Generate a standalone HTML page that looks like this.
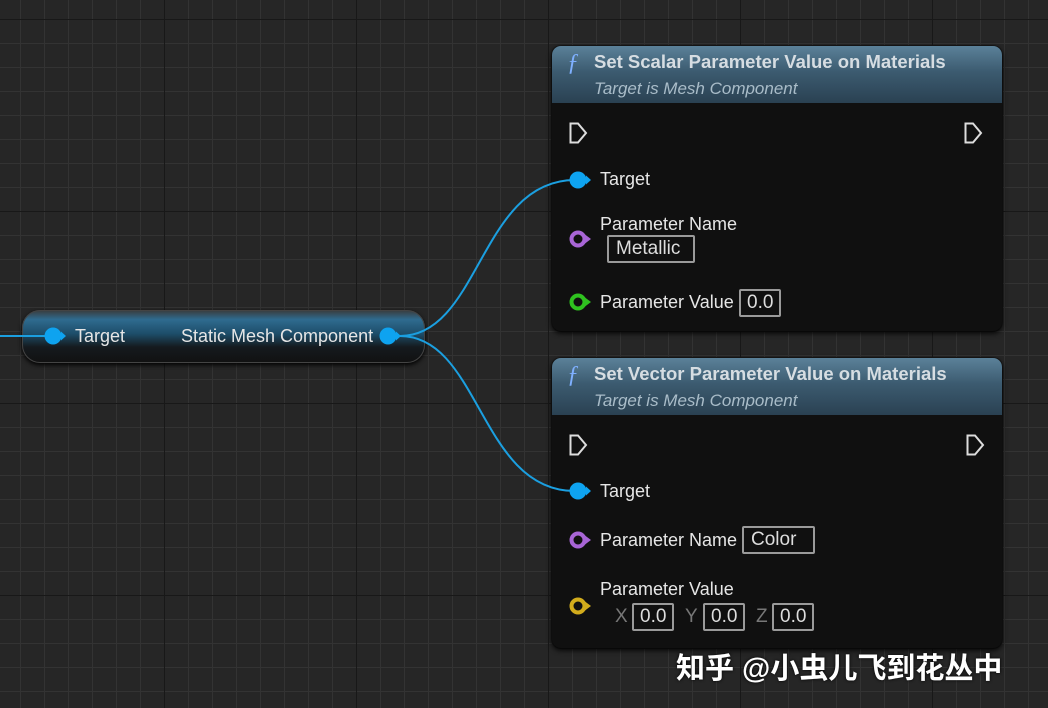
<!DOCTYPE html>
<html><head><meta charset="utf-8"><style>
body{margin:0;width:1048px;height:708px;overflow:hidden;background:#262626;font-family:"Liberation Sans","Noto Sans CJK SC",sans-serif;color:#e6e6e6;position:relative}
.grid{position:absolute;inset:0;
background-image:
linear-gradient(to right,#181818 1px,transparent 1px),
linear-gradient(to bottom,#181818 1px,transparent 1px),
linear-gradient(to right,#333 1px,transparent 1px),
linear-gradient(to bottom,#333 1px,transparent 1px);
background-size:192px 192px,192px 192px,24px 24px,24px 24px;
background-position:164px 19px,164px 19px,20px 19px,20px 19px}
.node{position:absolute;background:#101010;border-radius:9px;box-shadow:0 2px 6px #000,0 0 0 1px #1a1a1a;overflow:hidden}
.hdr{position:absolute;left:0;right:0;top:0;height:57px;background:linear-gradient(180deg,#5b8199 0%,#3c5b70 45%,#2a4152 100%)}
.t{position:absolute;white-space:nowrap;font-size:18px}
.title{font-weight:bold;font-size:18.5px;color:#d6dde2}
.sub{font-style:italic;font-size:17px;color:#a9bcc8}
.box{position:absolute;border:2px solid #9a9a9a;border-radius:2px;font-size:19px;color:#ddd;padding:0 7px;line-height:24px;white-space:nowrap}
.f{position:absolute;font-family:"Liberation Serif",serif;font-style:italic;font-size:24px;color:#7fb0ff}
svg{position:absolute;overflow:visible}
</style></head><body>
<div class="grid"></div>

<!-- compact node -->
<div style="position:absolute;left:22px;top:310px;width:403px;height:53px;border-radius:18px;background:linear-gradient(180deg,#3a3a3a 0%,#2f6b8f 18%,#1d4d69 45%,#151a1e 70%,#111 100%);box-shadow:0 2px 5px #000,inset 0 0 0 1px #444"></div>
<div class="t" style="left:75px;top:326px">Target</div>
<div class="t" style="left:181px;top:326px">Static Mesh Component</div>

<!-- node 1 -->
<div class="node" style="left:552px;top:46px;width:450px;height:285px"><div class="hdr"></div></div>
<div class="f" style="left:567px;top:50px">ƒ</div>
<div class="t title" style="left:594px;top:51px">Set Scalar Parameter Value on Materials</div>
<div class="t sub" style="left:594px;top:79px">Target is Mesh Component</div>
<div class="t" style="left:600px;top:169px">Target</div>
<div class="t" style="left:600px;top:214px">Parameter Name</div>
<div class="box" style="left:607px;top:235px">Metallic&nbsp;</div>
<div class="t" style="left:600px;top:292px">Parameter Value</div>
<div class="box" style="left:739px;top:289px;padding:0 6px">0.0</div>

<!-- node 2 -->
<div class="node" style="left:552px;top:358px;width:450px;height:290px"><div class="hdr"></div></div>
<div class="f" style="left:567px;top:362px">ƒ</div>
<div class="t title" style="left:594px;top:363px">Set Vector Parameter Value on Materials</div>
<div class="t sub" style="left:594px;top:391px">Target is Mesh Component</div>
<div class="t" style="left:600px;top:481px">Target</div>
<div class="t" style="left:600px;top:530px">Parameter Name</div>
<div class="box" style="left:742px;top:526px;width:55px">Color</div>
<div class="t" style="left:600px;top:579px">Parameter Value</div>
<div class="t" style="left:615px;top:606px;color:#777;font-size:19px">X</div>
<div class="box" style="left:632px;top:603px;padding:0 6px">0.0</div>
<div class="t" style="left:685px;top:606px;color:#777;font-size:19px">Y</div>
<div class="box" style="left:703px;top:603px;padding:0 6px">0.0</div>
<div class="t" style="left:756px;top:606px;color:#777;font-size:19px">Z</div>
<div class="box" style="left:772px;top:603px;padding:0 6px">0.0</div>

<svg style="left:0;top:0" width="1048" height="708">
<defs>
<g id="bp"><circle cx="9" cy="9" r="8.5" fill="#0ea3f0"/><path d="M17 4.5 L22 9 L17 13.5Z" fill="#0ea3f0"/></g>
<g id="ex"><path d="M1.5 1.5 H9 L17 11 L9 20.5 H1.5Z" fill="none" stroke="#ddd" stroke-width="2"/></g>
</defs>
<path d="M0 336 L48 336" stroke="#1b9fe0" stroke-width="2" fill="none"/>
<path d="M400 336 C480 336 480 180 575 180" stroke="#1b9fe0" stroke-width="2" fill="none"/>
<path d="M400 336 C480 336 480 491 575 491" stroke="#1b9fe0" stroke-width="2" fill="none"/>
<use href="#bp" x="44" y="327"/>
<use href="#bp" x="379" y="327"/>
<use href="#ex" x="569" y="122"/>
<use href="#ex" x="964" y="122"/>
<use href="#bp" x="569" y="171"/>
<g transform="translate(569,230)"><circle cx="9" cy="9" r="6.5" fill="none" stroke="#a865d6" stroke-width="4"/><path d="M16 4.5 L22 9 L16 13.5Z" fill="#a865d6"/></g>
<g transform="translate(569,293)"><circle cx="9" cy="9" r="6.5" fill="none" stroke="#2fc21f" stroke-width="4"/><path d="M16 4.5 L22 9 L16 13.5Z" fill="#2fc21f"/></g>
<use href="#ex" x="569" y="434"/>
<use href="#ex" x="966" y="434"/>
<use href="#bp" x="569" y="482"/>
<g transform="translate(569,531)"><circle cx="9" cy="9" r="6.5" fill="none" stroke="#a865d6" stroke-width="4"/><path d="M16 4.5 L22 9 L16 13.5Z" fill="#a865d6"/></g>
<g transform="translate(569,597)"><circle cx="9" cy="9" r="6.5" fill="none" stroke="#d2ac1c" stroke-width="4"/><path d="M16 4.5 L22 9 L16 13.5Z" fill="#d2ac1c"/></g>
</svg>

<div class="t" style="left:676px;top:645px;font-size:29px;color:#fff;font-weight:bold;text-shadow:0 0 3px #000">知乎 @小虫儿飞到花丛中</div>
</body></html>
